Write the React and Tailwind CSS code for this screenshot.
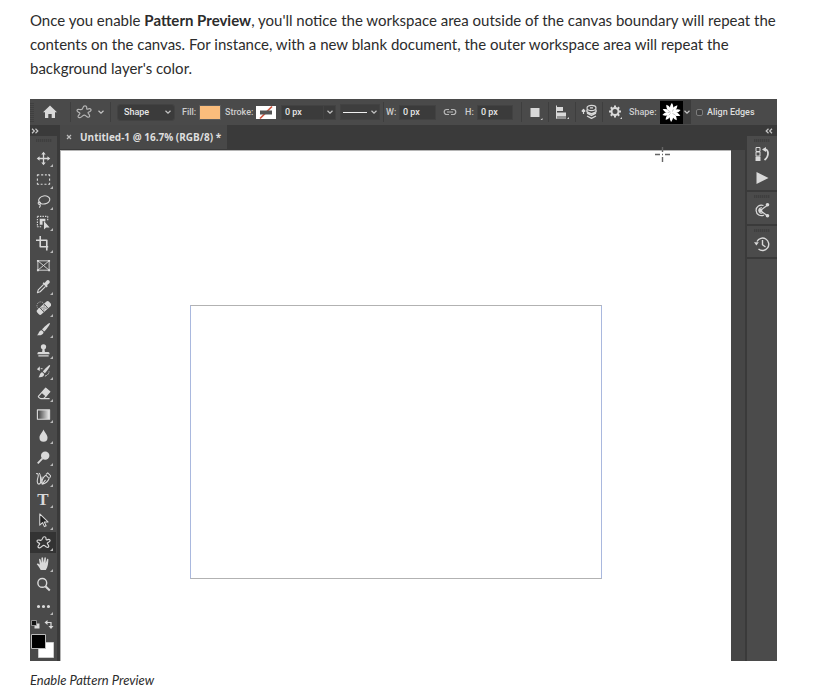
import React from "react";

const INK = "#d9d9d9";

function Icon({ children, className = "size-4" }) {
  return (
    <svg
      viewBox="0 0 16 16"
      className={`block shrink-0 ${className}`}
      fill="none"
      stroke={INK}
      strokeWidth="1.2"
      strokeLinejoin="round"
      aria-hidden="true"
    >
      {children}
    </svg>
  );
}

function Chevron() {
  return (
    <svg viewBox="0 0 8 8" className="block size-2 shrink-0" fill="none" stroke="#c4c4c4" strokeWidth="1.2" aria-hidden="true">
      <path d="M1.500 2.800 4 5.200 6.500 2.800" />
    </svg>
  );
}

const BLOB =
  "M7 3.600C7.600 1.400 10.600 1.200 10.700 3.400C10.700 4.400 10.300 5 11.200 5.200C12.400 5.300 13.600 4 14.700 5.100C15.900 6.700 13.400 7.700 12.200 8.500C11.400 9.300 14 10.600 13.600 12.300C12.900 14.200 10.600 12.800 9.600 11.700C8.800 10.900 7.600 11 6.600 11.900C5.400 13.200 3.300 14.600 2.200 13C1.400 11.400 4.200 10.400 3.900 9.200C3.400 8.300 .9 8.200 1 6.400C1.400 4.500 3.600 5.600 4.900 5.700C6.200 5.700 6.700 4.700 7 3.600Z";

const tools = [
  { name: "Move", art: (
    <g>
      <path d="M8 3v10M3 8h10" strokeWidth="1.400" />
      <path d="M8 .8 10.400 3.800H5.600ZM8 15.200 5.600 12.200h4.800ZM.8 8l3-2.400v4.800ZM15.200 8l-3 2.400V5.600Z" fill={INK} stroke="none" />
    </g>
  ) },
  { name: "Rectangular marquee", art: <path d="M1.500 4.500V3h2M5.500 3h2.200M9.500 3h2M13 3h1.500v1.500M14.500 6.800v2.400M14.500 11.500V13H13M11.200 13H9M7 13H5M3.300 13H1.500v-1.500M1.500 9.200V6.800" /> },
  { name: "Lasso", art: (
    <g>
      <ellipse cx="8.800" cy="6.300" rx="6" ry="4.300" transform="rotate(-10 8.800 6.300)" />
      <path d="M3.200 8.600c-1.600 1-.8 2.800.8 2.300 1.400-.5.8-2.400-.8-2.300M4.300 11c.6 1.200.3 2.400-.7 3.500" />
    </g>
  ) },
  { name: "Object selection", art: (
    <g>
      <path d="M1.500 1.500h11v4M1.500 1.500v11h4" strokeDasharray="1.500 1.200" />
      <path d="M4 4h6v3L7 6.500v4H4Z" fill={INK} stroke="none" />
      <path d="M8.500 6.500v9l2.300-2.200h3.700Z" fill={INK} stroke="none" />
    </g>
  ) },
  { name: "Crop", art: <path d="M4.500 0v11.500H13M0 4.500h11.500V15.500" strokeWidth="1.700" /> },
  { name: "Frame", plain: true, art: (
    <g strokeWidth="1">
      <path d="M2 3h12v10H2ZM2 3l12 10M14 3 2 13" />
      <path d="M1 2h2v2H1ZM13 2h2v2h-2ZM1 12h2v2H1ZM13 12h2v2h-2Z" fill={INK} stroke="none" />
    </g>
  ) },
  { name: "Eyedropper", art: (
    <g>
      <path d="M8.200 5.800 2.400 11.600 1.500 14.500 4.400 13.600 10.200 7.800" />
      <path d="m7 4.600 1.300-1.200.9.800 2-2.400c2-1.900 4.700.8 2.900 2.800l-2.400 2 .9.900L11.300 9Z" fill={INK} stroke="none" />
    </g>
  ) },
  { name: "Healing brush", art: (
    <g>
      <circle cx="5" cy="6" r="4" strokeDasharray="1 1" strokeWidth=".8" />
      <g transform="rotate(-42 8.500 8.500)">
        <rect x="0" y="5.200" width="17" height="6.600" rx="2" fill={INK} stroke="none" />
        <path d="M5.500 5v7M11.500 5v7" stroke="#4a4a4a" strokeWidth=".9" />
        <path d="M7 7h.1M8.500 8.500h.1M10 10h.1M10 7h.1M7 10h.1" stroke="#4a4a4a" strokeWidth="1.200" strokeLinecap="round" />
      </g>
    </g>
  ) },
  { name: "Brush", art: (
    <g fill={INK} stroke="none">
      <path d="M14.800 1.200c.8.800-4.600 7.800-6 8.800L6.500 8C7.500 6.500 14 .4 14.800 1.200Z" />
      <path d="M6 8.700 8.100 10.600C8 13.300 4.500 14.800 1 14c2-1 1.500-4.600 5-5.300Z" />
    </g>
  ) },
  { name: "Clone stamp", art: (
    <g fill={INK} stroke="none">
      <circle cx="8" cy="4" r="2.800" />
      <path d="M7 6h2l.5 3.500H13c1.400 0 1.500 1 1.500 2.500h-13C1.500 10.500 1.600 9.500 3 9.500h3.500ZM2.500 13h11v1.500h-11Z" />
    </g>
  ) },
  { name: "History brush", art: (
    <g>
      <path d="M2 5h5M9.500 13c3-1 4.600-3 4.400-5" strokeWidth="1" strokeDasharray="2 1" />
      <path d="m1 5.500 3-3v5Z" fill={INK} stroke="none" />
      <path d="M15 1.200c.8.700-4.300 7.600-5.600 8.600L7.300 8C8.300 6.600 14.200.4 15 1.200ZM6.700 8.800l2 1.800c0 2.700-3 4.100-6.200 3.400 2-1 1-4.500 4.200-5.200Z" fill={INK} stroke="none" />
    </g>
  ) },
  { name: "Eraser", art: (
    <g>
      <path d="M6.300 6.700 10.300 2.200l4.500 3.800-4.100 4.700Z" fill={INK} />
      <path d="M6.300 6.700 2.500 11c-.4.700 1.600 2.400 2.600 2.400H8l2.700-2.700M5 13.500h9.500" />
    </g>
  ) },
  { name: "Gradient", art: (
    <g>
      <defs>
        <linearGradient id="toolGradient"><stop stopColor="#3a3a3a" /><stop offset="1" stopColor="#f0f0f0" /></linearGradient>
      </defs>
      <rect x="1.500" y="3" width="13" height="10" fill="url(#toolGradient)" />
    </g>
  ) },
  { name: "Blur", art: <path d="M8 1.500C9 4.500 12.300 7 12.300 10.300a4.300 4.300 0 0 1-8.600 0C3.700 7 7 4.500 8 1.500Z" fill={INK} stroke="none" /> },
  { name: "Dodge", art: (
    <g>
      <circle cx="9.800" cy="6" r="4.500" fill={INK} stroke="none" />
      <path d="M7 9 1.800 14.200" strokeWidth="1.900" />
    </g>
  ) },
  { name: "Curvature pen", art: (
    <g strokeWidth="1.100">
      <path d="M0 3c2-1 3 1 2 4s-1 7 1 7 3-4 3.500-8" />
      <path d="M3 2.500c3 0 1 8 2.500 10.500M6.500 14c-.5-4 1-7.500 4-9.500l3.500 3.500c-1.300 3.400-4 5.400-7.500 6ZM7 13.500l3.200-4M10.700 3.500 12.500 2 16 5.500l-1.600 1.700" />
    </g>
  ) },
  { name: "Horizontal type", glyph: "T" },
  { name: "Path selection", art: <path d="M4 1v12l3-2.800 2 4.300 1.800-.8-2-4.200h4Z" fill="#222" strokeWidth="1.100" /> },
  { name: "Custom shape", active: true, art: <path d={BLOB} /> },
  { name: "Hand", art: (
    <path d="M5 14.800C4 12.500 2.500 10.500.8 8.700c.3-1.300 1.700-1 3.300.5L3.200 3.700c.2-1 1.400-.8 1.600 0L6 7.500 5.800 2c.2-1 1.500-1 1.700 0l.7 5.300L9 1.800c.3-.9 1.500-.7 1.600.2l-.3 5.700 1.500-4.200c.4-.8 1.500-.5 1.400.5-.2 3.700-.4 7.500-2.700 10.800Z" fill={INK} stroke="none" />
  ) },
  { name: "Zoom", plain: true, art: (
    <g>
      <circle cx="6.700" cy="6.300" r="4.700" strokeWidth="1.500" />
      <path d="m10 9.800 4.700 4.700" strokeWidth="2.200" />
    </g>
  ) },
  { name: "Edit toolbar", art: <path d="M1 8a1.700 1.700 0 1 0 3.400 0A1.700 1.700 0 1 0 1 8ZM6.300 8a1.700 1.700 0 1 0 3.400 0 1.700 1.700 0 1 0-3.400 0ZM11.600 8a1.700 1.700 0 1 0 3.400 0 1.700 1.700 0 1 0-3.400 0Z" fill={INK} stroke="none" /> },
];

const petals = [0, 36, 72, 108, 144, 180, 216, 252, 288, 324];

function Divider() {
  return <span className="h-5 w-px shrink-0 bg-[#3e3e3e]" />;
}

function Grip() {
  return <span className="mx-auto block h-[3px] w-4 bg-[repeating-linear-gradient(90deg,#3f3f3f_0_1px,#464646_1px_2px)]" />;
}

function Field({ id, label, className }) {
  return (
    <input
      id={id}
      aria-label={label}
      defaultValue="0 px"
      className={`h-[13px] min-w-0 bg-[#3b3b3b] pl-[3px] text-[#e6e6e6] outline outline-[#424242] ${className}`}
    />
  );
}

function OptionsBar() {
  return (
    <div className="flex h-[26px] items-center overflow-hidden bg-[#4a4a4a] font-['Roboto','Liberation_Sans',sans-serif] text-[9px] leading-3 font-medium text-[#cdcdcd]">
      <span className="h-5 w-1 shrink-0 bg-[repeating-linear-gradient(0deg,#404040_0_1px,#4a4a4a_1px_2px)]" />
      <button type="button" aria-label="Home" className="ml-2 shrink-0">
        <Icon><path d="M8 1.600 15 8.300h-2V14H9.700v-4H6.300v4H3V8.300H1Z" fill={INK} stroke="none" /></Icon>
      </button>
      <div className="ml-3 flex shrink-0 items-center">
        <Divider />
        <button type="button" aria-label="Custom shape tool" className="ml-[5px] flex items-center gap-[5px]">
          <Icon><path d={BLOB} stroke="#b4b4b4" /></Icon>
          <Chevron />
        </button>
      </div>
      <div className="ml-[5px] flex shrink-0 items-center">
        <Divider />
        <div className="relative ml-[7px]">
          <select aria-label="Tool mode" className="block h-[15px] w-[56px] appearance-none rounded-xs bg-[#3b3b3b] pl-[6px] text-[#e6e6e6] outline outline-[#424242]">
            <option>Shape</option>
            <option>Path</option>
            <option>Pixels</option>
          </select>
          <span className="pointer-events-none absolute inset-y-0 right-[2px] flex items-center"><Chevron /></span>
        </div>
      </div>
      <div className="ml-2 flex w-[38px] shrink-0 items-center justify-between">
        <span>Fill:</span>
        <button type="button" aria-label="Fill color" className="h-[13px] w-5 bg-[#fbbd7c] outline outline-[#5c5c5c]" />
      </div>
      <div className="ml-[5px] flex w-[51px] shrink-0 items-center justify-between">
        <span>Stroke:</span>
        <button type="button" aria-label="No stroke color">
          <svg viewBox="0 0 20 13" className="block h-[13px] w-5" aria-hidden="true">
            <path d="M0 0h20v13H0Z" fill="#fff" />
            <path d="M4 12.500 16 .5" stroke="#d0523c" strokeWidth="1.600" />
            <path d="M4 4.500h12v4H4Z" fill="#555" />
          </svg>
        </button>
      </div>
      <div className="ml-[6px] flex shrink-0 items-center">
        <Field id="strokeWidth" label="Stroke width" className="w-[41px]" />
        <button type="button" aria-label="Stroke width presets" className="ml-px flex h-[13px] w-[11px] items-center justify-center bg-[#3b3b3b] outline outline-[#424242]"><Chevron /></button>
      </div>
      <button type="button" aria-label="Stroke type" className="ml-[6px] flex h-[14px] w-[38px] shrink-0 items-center justify-between bg-[#3e3e3e] pr-px pl-[2px] outline outline-[#424242]">
        <span className="h-px w-6 bg-[#f0f0f0]" />
        <Chevron />
      </button>
      <div className="ml-1 flex shrink-0 items-center">
        <Divider />
        <label htmlFor="shapeWidth" className="ml-[2px] w-[14px]">W:</label>
        <Field id="shapeWidth" label="Width" className="w-[35px]" />
      </div>
      <button type="button" aria-label="Link width and height" className="ml-[7px] shrink-0">
        <Icon>
          <path d="M7 5.500H4.700a2.500 2.500 0 0 0 0 5H7M9 5.500h2.300a2.500 2.500 0 0 1 0 5H9M5 8h6" stroke="#b8b8b8" />
        </Icon>
      </button>
      <div className="ml-[7px] flex shrink-0 items-center">
        <label htmlFor="shapeHeight" className="w-[13px]">H:</label>
        <Field id="shapeHeight" label="Height" className="w-[34px]" />
      </div>
      <div className="ml-[9px] flex shrink-0 items-center gap-[3px]">
        <Divider />
        <button type="button" aria-label="Path operations" className="w-5 pl-[2px]">
          <Icon><path d="M3.500 4h9v9h-9Z" fill={INK} stroke="none" /><path d="M13.500 16h2v-2Z" fill={INK} stroke="none" /></Icon>
        </button>
        <Divider />
        <button type="button" aria-label="Path alignment" className="w-5 pl-[2px]">
          <Icon><path d="M2.500 1.500v13M2 14h10" strokeWidth="1" /><path d="M3 3h6v4H3ZM3 8.500h9v4H3ZM13 15h2v-2Z" fill={INK} stroke="none" /></Icon>
        </button>
        <Divider />
        <button type="button" aria-label="Path arrangement" className="w-5 pl-[2px]">
          <Icon>
            <path d="M2.500 10V6M.8 7.500l1.700-2 1.700 2" />
            <path d="M6 4c0-3.500 9-3.500 9 0s-9 3.500-9 0ZM9 3.800h3" />
            <path d="M6 5.500v2.300l4.500 2L15 7.800V5.500M6 9.200l4.500 2.300L15 9.200M6 12l4.500 2.300L15 12" strokeWidth="1.400" />
          </Icon>
        </button>
        <Divider />
      </div>
      <button type="button" aria-label="Path options" className="ml-1 shrink-0">
        <Icon>
          <circle cx="8" cy="7.500" r="3.500" strokeWidth="2" />
          <path d="M8 1.500v2M8 11.500v2M2 7.500h2M12 7.500h2M3.800 3.300l1.400 1.400M10.800 10.300l1.400 1.400M3.800 11.700l1.400-1.400M10.800 4.700l1.400-1.400" strokeWidth="2" />
          <path d="M13 15h2v-2Z" fill={INK} stroke="none" />
        </Icon>
      </button>
      <span className="ml-[6px] w-[31px] shrink-0">Shape:</span>
      <button type="button" aria-label="Shape preset" className="flex h-6 shrink-0 items-center bg-[#3b3b3b]">
        <svg viewBox="0 0 24 24" className="block h-[23px] w-[23px] bg-black" aria-hidden="true">
          {petals.map((angle) => (
            <path key={angle} d="M12 12C9.300 8 10.300 5 12.400 2.200C14.300 5 14.500 8 12 12Z" fill="#fff" transform={`rotate(${angle} 12 12)`} />
          ))}
          <circle cx="12" cy="12" r="5" fill="#fff" />
          <path d="m8 9.500 3 2M14 8.500l-1 2.500M9 15l2-2M13 13l3 1.500M8 12h2" stroke="#999" strokeWidth=".6" />
        </svg>
        <Chevron />
      </button>
      <label className="ml-[5px] flex shrink-0 items-center gap-1 text-[#dedede]">
        <input type="checkbox" className="size-[7px] appearance-none rounded-xs border border-[#7c7c7c] bg-[#3f3f3f]" />
        Align Edges
      </label>
    </div>
  );
}

function DoubleArrow({ left = false }) {
  return (
    <svg viewBox="0 0 8 6" className="block h-[6px] w-2" fill="none" stroke="#c8c8c8" strokeWidth="1.200" aria-hidden="true">
      {left ? <path d="M3.500.8 1.200 3l2.300 2.200M7 .8 4.700 3 7 5.200" /> : <path d="M1 .8 3.300 3 1 5.200M4.500.8 6.800 3 4.500 5.200" />}
    </svg>
  );
}

function ToolBar() {
  return (
    <aside className="flex w-[30px] shrink-0 flex-col border-r-[3px] border-[#3a3a3a] bg-[#4a4a4a]">
      <div className="flex h-[11px] items-center bg-[#3a3a3a] pl-px"><DoubleArrow /></div>
      <div className="h-3 pt-[3px]"><Grip /></div>
      <div className="flex flex-1 flex-col">
        {tools.map((tool) => (
          <button
            key={tool.name}
            type="button"
            aria-label={tool.name}
            className={`relative flex w-[26px] flex-1 items-center justify-center ${tool.active ? "bg-[#333]" : ""}`}
          >
            {tool.glyph ? (
              <span className="font-['Liberation_Serif',serif] text-[17px] leading-4 font-bold text-[#d9d9d9]">{tool.glyph}</span>
            ) : (
              <Icon className="size-[15px]">{tool.art}</Icon>
            )}
            {!tool.plain && (
              <svg viewBox="0 0 3 3" className="absolute right-[3px] bottom-[2px] size-[3px]" aria-hidden="true">
                <path d="M3 0v3H0Z" fill="#b8b8b8" />
              </svg>
            )}
          </button>
        ))}
      </div>
      <div className="h-[44px]">
        <svg viewBox="0 0 27 44" className="block h-[44px] w-[27px]" aria-hidden="true">
          <path d="M4.500 6.500h5v5h-5Z" fill="#d9d9d9" />
          <path d="M1.500 3.500h5v5h-5Z" fill="#111" stroke="#aaa" strokeWidth=".8" />
          <path d="M17 5.500h4v4" fill="none" stroke="#d9d9d9" strokeWidth="1.200" />
          <path d="m14.500 5.500 3-2.500v5ZM21 12l-2.500-3h5Z" fill="#d9d9d9" />
          <path d="M8.500 25.500h15v15h-15Z" fill="#fff" stroke="#ccc" />
          <path d="M1.500 17.500h14v14h-14Z" fill="#000" stroke="#bbb" />
        </svg>
      </div>
    </aside>
  );
}

function Panels() {
  return (
    <aside className="w-8 shrink-0 border-l-2 border-[#3a3a3a] bg-[#4b4b4b]">
      <div className="flex h-[11px] items-center justify-end bg-[#3a3a3a] pr-1"><DoubleArrow left /></div>
      <div className="flex h-14 flex-col items-center border-b-2 border-[#3a3a3a] pt-[3px]">
        <Grip />
        <button type="button" aria-label="Libraries" className="mt-1">
          <Icon>
            <path d="M2 1.500h4v4H2ZM2 6h4v4H2Z" strokeWidth="1" />
            <path d="M1.500 10.500h5v4.500h-5Z" fill={INK} stroke="none" />
            <path d="M10 3.500c5-1 5.500 6.500.5 10.500" strokeWidth="1.800" />
            <path d="m8 3.500 4-2.500v5Z" fill={INK} stroke="none" />
          </Icon>
        </button>
        <button type="button" aria-label="Actions" className="mt-2">
          <Icon><path d="m2.500 2 12 6-12 6Z" fill={INK} stroke="none" /></Icon>
        </button>
      </div>
      <div className="flex h-[34px] flex-col items-center border-b-2 border-[#3a3a3a] pt-[3px]">
        <Grip />
        <button type="button" aria-label="Share" className="mt-1">
          <Icon>
            <path d="M9.500 3.500A5.300 5.300 0 1 0 10 13M8 5.800A2.700 2.700 0 1 0 8.500 11M6.500 8.500l6.500-5M6.500 8.500l6.500 5" />
            <circle cx="6.500" cy="8.500" r="1.200" fill={INK} />
            <circle cx="13.500" cy="2.700" r="1.800" fill={INK} stroke="none" />
            <circle cx="13.500" cy="13.800" r="1.800" fill={INK} stroke="none" />
          </Icon>
        </button>
      </div>
      <div className="flex h-[33px] flex-col items-center border-b-2 border-[#3a3a3a] pt-[3px]">
        <Grip />
        <button type="button" aria-label="History" className="mt-1">
          <Icon>
            <path d="M3 5.500A6.200 6.200 0 1 1 4.500 13M8.500 4v4.800l3 2.200" strokeWidth="1.400" />
            <path d="M0 6.200h4.800L2.400 9.500Z" fill={INK} stroke="none" />
          </Icon>
        </button>
      </div>
    </aside>
  );
}

function Workspace() {
  return (
    <div className="flex min-w-0 flex-1 flex-col">
      <div className="flex h-[25px] bg-[#3a3a3a]">
        <div className="flex h-6 items-center bg-[#484848] pr-[6px] pl-[6px]">
          <button type="button" aria-label="Close document" className="w-[14px]">
            <svg viewBox="0 0 6 6" className="block size-[6px]" stroke="#bdbdbd" strokeWidth="1.200" aria-hidden="true">
              <path d="m1 1 4 4M5 1 1 5" />
            </svg>
          </button>
          <span className="font-['Open_Sans','Noto_Sans',sans-serif] text-[10px] leading-3 font-bold whitespace-nowrap text-[#dedede]">
            Untitled-1 @ 16.7% (RGB/8) *
          </span>
        </div>
      </div>
      <div className="flex h-[511px]">
        <div className="relative flex min-w-0 flex-1 justify-center border-t border-l border-[#b5b5b5] bg-white pt-[154px]">
          <div className="h-[274px] w-[412px] border border-x-[#a9b8de] border-y-[#b2b2b2]" />
          <svg viewBox="0 0 15 15" className="absolute -top-1 right-[61px] size-[15px]" stroke="#666" strokeWidth="1.400" aria-hidden="true">
            <path d="M0 7.500h5M10 7.500h5M7 7.500h1M7.500 0v5M7.500 10v5" />
          </svg>
        </div>
        <div className="w-[14px] shrink-0 bg-[#464646]" />
      </div>
    </div>
  );
}

export default function App() {
  return (
    <main className="bg-white px-[30px] pt-2 font-['Lato','Noto_Sans',sans-serif] text-[#2c2c2c]">
      <p className="text-[15px] leading-6">
        Once you enable <b>Pattern Preview</b>, you'll notice the workspace area outside of the canvas boundary will
        repeat the contents on the canvas. For instance, with a new blank document, the outer workspace area will
        repeat the background layer's color.
      </p>
      <figure className="mt-[19px] max-w-[747px]">
        <OptionsBar />
        <div className="flex">
          <ToolBar />
          <Workspace />
          <Panels />
        </div>
        <figcaption className="pt-[9px] text-[13px] leading-5 italic">Enable Pattern Preview</figcaption>
      </figure>
    </main>
  );
}
